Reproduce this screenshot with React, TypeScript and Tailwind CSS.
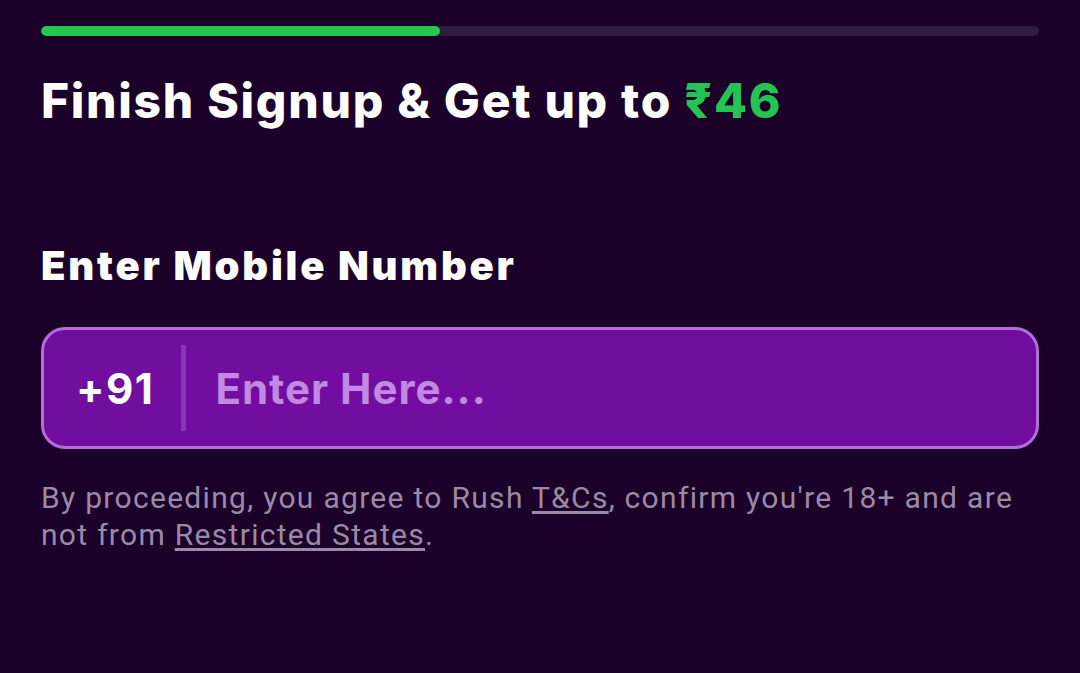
import { useState } from "react";

// Signup step: progress bar, reward headline and the mobile-number field.
const PROGRESS = 0.4;

export default function App() {
  const [phone, setPhone] = useState("");

  return (
    <div
      className="w-[1080px] h-[673px] bg-[#1b0029] px-[41px] pt-[26px] overflow-hidden"
      style={{ fontFamily: "Inter, 'Noto Sans', sans-serif" }}
    >
      {/* Step progress */}
      <div className="h-[10px] w-full rounded-full bg-[#301a41] overflow-hidden">
        <div
          className="h-full rounded-full bg-[#23c94b]"
          style={{ width: `${PROGRESS * 100}%` }}
        />
      </div>

      <h1 className="mt-[37px] text-[48px] leading-[56px] font-extrabold tracking-[1.7px] text-white whitespace-nowrap">
        Finish Signup &amp; Get up to <span className="text-[#23c453]">₹46</span>
      </h1>

      <h2 className="mt-[114px] text-[40px] leading-[46px] font-black tracking-[2.8px] text-white">
        Enter Mobile Number
      </h2>

      {/* Phone input with country code */}
      <label className="mt-[38px] flex h-[122px] items-center rounded-[24px] border-[3px] border-[#b26ddc] bg-[#720e9f]">
        <span className="pl-[32px] pr-[27px] text-[42px] font-bold tracking-[1.5px] text-white">+91</span>
        <span className="h-[86px] w-[5px] bg-[#8c36b5]" />
        <input
          value={phone}
          onChange={(e) => setPhone(e.target.value)}
          placeholder="Enter Here..."
          inputMode="numeric"
          className="ml-[29px] flex-1 bg-transparent text-[42px] font-bold tracking-[1px] text-white placeholder:text-[#c288e3] outline-none"
        />
      </label>

      <p
        className="mt-[30px] text-[30px] leading-[37px] tracking-[1.3px] text-[#9b8aa7]"
        style={{ fontFamily: "Roboto, 'Noto Sans', sans-serif" }}
      >
        By proceeding, you agree to Rush <a className="underline underline-offset-[3px]">T&amp;Cs</a>, confirm
        you're 18+ and are not from <a className="underline underline-offset-[3px]">Restricted States</a>.
      </p>
    </div>
  );
}
